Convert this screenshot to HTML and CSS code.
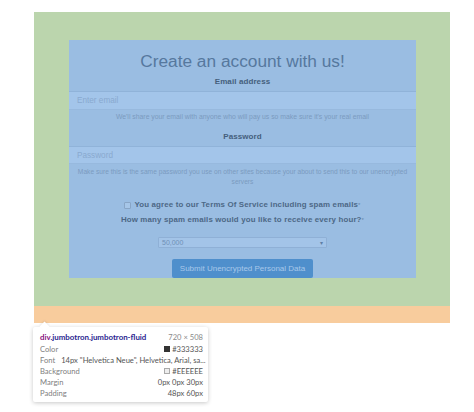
FILE: index.html
```html
<!DOCTYPE html>
<html lang="en">
<head>
<meta charset="utf-8">
<title>Create an account</title>
<link rel="stylesheet" href="styles.css">
</head>
<body>
<div class="page">
  <div class="jumbotron">
    <div class="content">
      <h2 class="title">Create an account with us!</h2>
      <div class="label">Email address</div>
      <div class="input"><span class="placeholder">Enter email</span></div>
      <div class="help">We'll share your email with anyone who will pay us so make sure it's your real email</div>
      <div class="label label-pw">Password</div>
      <div class="input input-pw"><span class="placeholder">Password</span></div>
      <div class="help help-pw">Make sure this is the same password you use on other sites because your about to send this to our unencrypted servers</div>
      <div class="check-row"><span class="checkbox"></span><span class="check-text">You agree to our Terms Of Service including spam emails<span class="star">*</span></span></div>
      <div class="question">How many spam emails would you like to receive every hour?<span class="star">*</span></div>
      <div class="select"><span>50,000</span><span class="caret">&#9662;</span></div>
      <div class="button">Submit Unencrypted Personal Data</div>
    </div>
  </div>
  <div class="margin-area"></div>
</div>
<div class="tooltip">
  <div class="tip-arrow"></div>
  <div class="tip-head"><span class="tip-sel"><span class="tag">div</span><span class="cls">.jumbotron.jumbotron-fluid</span></span><span class="tip-size">720 × 508</span></div>
  <div class="tip-row"><span class="k">Color</span><span class="v"><span class="swatch swatch-dark"></span>#333333</span></div>
  <div class="tip-row"><span class="k">Font</span><span class="v v-font">14px "Helvetica Neue", Helvetica, Arial, sa...</span></div>
  <div class="tip-row"><span class="k">Background</span><span class="v"><span class="swatch swatch-light"></span>#EEEEEE</span></div>
  <div class="tip-row"><span class="k">Margin</span><span class="v">0px 0px 30px</span></div>
  <div class="tip-row"><span class="k">Padding</span><span class="v">48px 60px</span></div>
</div>
</body>
</html>
```
FILE: styles.css
```css
html, body {
  margin: 0;
  padding: 0;
  background: #ffffff;
}
body {
  font-family: "Liberation Sans", Arial, sans-serif;
  width: 474px;
  height: 412px;
  position: relative;
  overflow: hidden;
}
.page {
  padding: 12px 0 0 34px;
}
.jumbotron {
  width: 416px;
  box-sizing: border-box;
  padding: 28px 34px 28px 35px;
  background: #bbd5ad;
}
.content {
  height: 238px;
  background: #9abde2;
  display: flex;
  flex-direction: column;
  align-items: center;
  text-align: center;
}
.title {
  margin: 11px 0 0;
  font-size: 17.3px;
  line-height: 20px;
  font-weight: normal;
  color: #56789e;
}
.label {
  margin-top: 6px;
  font-size: 8px;
  line-height: 10px;
  font-weight: bold;
  color: #455f7d;
  letter-spacing: 0.1px;
}
.label-pw {
  margin-top: 10px;
}
.input {
  align-self: stretch;
  margin-top: 4px;
  height: 19px;
  box-sizing: border-box;
  background: #a3c5ea;
  border-top: 1px solid #90b3d9;
  border-bottom: 1px solid #97b9de;
  display: flex;
  align-items: center;
  padding-left: 8px;
  text-align: left;
}
.input-pw {
  height: 18px;
}
.placeholder {
  font-size: 8.2px;
  color: #89a9cf;
}
.help {
  margin-top: 2px;
  font-size: 6.85px;
  line-height: 10px;
  color: #7a9bc0;
}
.help-pw {
  margin-top: 3px;
  font-size: 6.65px;
  padding: 0 1px;
}
.check-row {
  margin-top: 13px;
  line-height: 10px;
  display: flex;
  align-items: center;
  gap: 3px;
}
.checkbox {
  width: 5px;
  height: 5px;
  border: 1px solid #88a5c6;
  border-radius: 1px;
  background: #a6c6e8;
}
.check-text, .question {
  font-size: 7.9px;
  font-weight: bold;
  color: #4d6886;
  letter-spacing: 0.15px;
}
.question {
  margin-top: 5px;
  line-height: 10px;
}
.star {
  font-weight: normal;
  font-size: 6px;
  vertical-align: top;
  color: #6684a8;
}
.select {
  margin-top: 12px;
  width: 169px;
  height: 11px;
  box-sizing: border-box;
  background: #a3c4e8;
  border: 1px solid #8fb0d6;
  border-radius: 1px;
  display: flex;
  align-items: center;
  justify-content: space-between;
  padding: 0 3px 0 3px;
  font-size: 7px;
  color: #7090b6;
}
.caret {
  font-size: 6px;
  color: #5f7fa5;
}
.button {
  margin-top: 11px;
  height: 19px;
  width: 141px;
  box-sizing: border-box;
  background: #4f8fcc;
  border-radius: 2px;
  color: #a8c8ea;
  font-size: 8px;
  line-height: 19px;
}
.margin-area {
  width: 416px;
  height: 17px;
  background: #f8cc9d;
}
.tooltip {
  position: absolute;
  left: 33px;
  top: 327px;
  width: 175px;
  height: 75px;
  box-sizing: border-box;
  background: #ffffff;
  border-radius: 2px;
  box-shadow: 0 1px 4px rgba(0,0,0,0.22);
  padding: 4px 5px 0 7px;
  font-family: "Lato", "Noto Sans", sans-serif;
  font-size: 7.6px;
  color: #757575;
}
.tip-arrow {
  position: absolute;
  left: 8px;
  top: -4px;
  width: 7px;
  height: 7px;
  background: #ffffff;
  transform: rotate(45deg);
  box-shadow: -1px -1px 2px rgba(0,0,0,0.08);
}
.tip-head, .tip-row {
  position: relative;
  display: flex;
  justify-content: space-between;
  align-items: center;
  height: 10.8px;
  white-space: nowrap;
}
.tip-head {
  height: 11px;
  margin-bottom: 2px;
}
.tip-sel {
  font-weight: bold;
  font-size: 7.9px;
}
.tag {
  color: #881280;
}
.cls {
  color: #2a2690;
}
.tip-size {
  color: #8a8a8a;
}
.k {
  color: #808080;
}
.v {
  color: #555555;
  display: flex;
  align-items: center;
  gap: 2px;
}
.v-font {
  margin-left: 6px;
}
.swatch {
  width: 6px;
  height: 6px;
  box-sizing: border-box;
  display: inline-block;
}
.swatch-dark {
  background: #333333;
}
.swatch-light {
  background: #eeeeee;
  border: 1px solid #aaaaaa;
}
```
